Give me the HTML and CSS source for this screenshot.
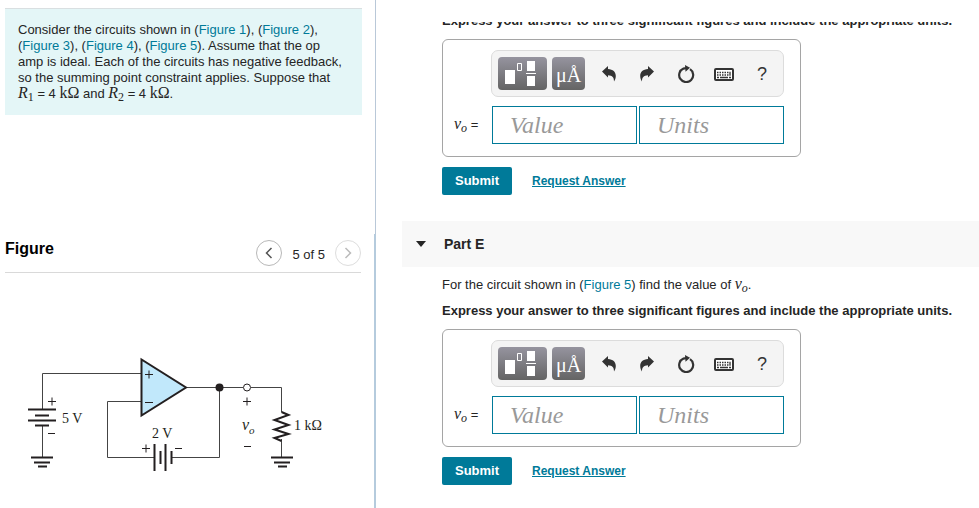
FILE: index.html
```html
<!DOCTYPE html>
<html lang="en">
<head>
<meta charset="utf-8">
<title>Op-amp circuits</title>
<link rel="stylesheet" href="styles.css">
</head>
<body>
<svg class="sprite" aria-hidden="true">
  <symbol id="template" viewBox="0 0 48 32">
    <path fill="#fff" d="M7 12h10v14H7zM29 3h8v10h-8zM29 18h8v10h-8zM28 15h10v1H28z"/>
    <path fill="none" stroke="#fff" d="M19.500 5.500h4v7h-4z"/>
  </symbol>
  <symbol id="undo" viewBox="0 0 14 16">
    <path d="M0 5.500 6 0v3c5 .3 7.800 3 7.800 7 0 2-.7 4-1.800 5.500 0-4-1.500-6-6-6.200V11.500z"/>
  </symbol>
  <symbol id="redo" viewBox="0 0 14 16">
    <path d="M14 5.500 8 0v3C3 3.300.200 6 .200 10c0 2 .7 4 1.800 5.500 0-4 1.500-6 6-6.200V11.500z"/>
  </symbol>
  <symbol id="reset" viewBox="0 0 18 18">
    <path d="M13 4.200A7 7 0 1 1 6.500 3.600L9.500 3" fill="none" stroke="currentColor" stroke-width="2.200"/>
    <path d="M8 0l5 2.700-4.500 4z"/>
  </symbol>
  <symbol id="keyboard" viewBox="0 0 20 14">
    <rect x="1" y="2" width="18" height="11" rx="1" fill="#fff" stroke="currentColor" stroke-width="2"/>
    <path d="M3 5.500h12M3 8h12" stroke="currentColor" stroke-width="1.500" stroke-dasharray="1.500 1"/>
    <path d="M3 10.500h2M6 10.500h8M15 10.500h2M16 4.700v4" stroke="currentColor" stroke-width="1.300"/>
  </symbol>
</svg>
<div class="page">
  <aside class="side">
    <section class="intro">
      <p class="problem">Consider the circuits shown in (<a href="#f1">Figure 1</a>), (<a href="#f2">Figure 2</a>), (<a href="#f3">Figure 3</a>), (<a href="#f4">Figure 4</a>), (<a href="#f5">Figure 5</a>). Assume that the op amp is ideal. Each of the circuits has negative feedback, so the summing point constraint applies. Suppose that <span class="math"><i>R</i><sub>1</sub></span> = 4 <span class="math">kΩ</span> and <span class="math"><i>R</i><sub>2</sub></span> = 4 <span class="math">kΩ</span>.</p>
    </section>
    <section class="figure" id="f5">
      <header class="figure-head">
        <h2>Figure</h2>
        <nav class="pager">
          <button type="button" aria-label="Previous figure"><svg width="8" height="12" viewBox="0 0 8 12"><path d="M6.500 1 1.500 6l5 5"/></svg></button>
          <span>5 of 5</span>
          <button type="button" aria-label="Next figure" disabled><svg width="8" height="12" viewBox="0 0 8 12"><path d="M1.500 1l5 5-5 5"/></svg></button>
        </nav>
      </header>
      <svg class="circuit" viewBox="5 350 340 125" width="340" height="125" role="img" aria-label="Op-amp circuit">
        <g class="wire">
          <path d="M141 373.500H42.500V409M42.500 426V457M141 401.500H107.500V457.500H154M171 457.500H219.500V387.500M186 387.500H243M251 387.500H281.500V412M281.500 439V457"/>
        </g>
        <path class="amp" d="M141.500 359.500v56L186 387.500z"/>
        <g class="plate">
          <path d="M28 409.500h28M35 415.500h14M28 420.500h28M35 425.500h14M154.500 444v27M160.500 451v13M165.500 444v27M171.500 451v13"/>
          <path d="M31 457.500h22M34 462.500h16M38 466.500h9M271 457.500h22M274 462.500h16M278 466.500h9"/>
          <path d="M281.500 412l7 3-14 5 14 5-14 4.500 14 4.500-14 4 7 3" fill="none"/>
        </g>
        <circle cx="219.500" cy="387.500" r="4" fill="#231f20"/>
        <circle cx="247" cy="387.500" r="3.500" fill="#fff" stroke="#231f20"/>
        <path class="sign" d="M145 374.500h8M149 370.500v8M145 402.500h8M48 401.500h8M52 397.500v8M48 433.500h7M142 448.500h8M146 444.500v8M175 448.500h7M243 401.500h8M247 397.500v8M244 446.500h7"/>
        <text x="62" y="423">5 V</text>
        <text x="152" y="438">2 V</text>
        <text x="242" y="430" class="var">v<tspan dy="4" class="small">o</tspan></text>
        <text x="294" y="430">1 kΩ</text>
      </svg>
    </section>
  </aside>
  <main class="content">
    <section class="part part-scrolled">
      <p class="instruction">Express your answer to three significant figures and include the appropriate units.</p>
      <form class="answer">
        <div class="toolbar">
          <button type="button" class="key wide" aria-label="Templates"><svg width="48" height="32"><use href="#template"/></svg></button>
          <button type="button" class="key" aria-label="Units">μÅ</button>
          <button type="button" class="tool" aria-label="Undo"><svg width="14" height="16"><use href="#undo"/></svg></button>
          <button type="button" class="tool" aria-label="Redo"><svg width="14" height="16"><use href="#redo"/></svg></button>
          <button type="button" class="tool" aria-label="Reset"><svg width="18" height="18"><use href="#reset"/></svg></button>
          <button type="button" class="tool" aria-label="Keyboard"><svg width="20" height="14"><use href="#keyboard"/></svg></button>
          <button type="button" class="tool" aria-label="Help">?</button>
        </div>
        <div class="entry">
          <label for="value-d"><span class="math"><i>v<sub>o</sub></i></span> =</label>
          <input id="value-d" type="text" placeholder="Value">
          <input type="text" placeholder="Units" aria-label="Units">
        </div>
      </form>
      <div class="actions"><button type="button" class="submit">Submit</button><a href="#answer-d">Request Answer</a></div>
    </section>
    <h2 class="part-title"><svg width="10" height="6" viewBox="0 0 10 6" aria-hidden="true"><path d="M0 0h10L5 6z"/></svg>Part E</h2>
    <section class="part">
      <p>For the circuit shown in (<a href="#f5">Figure 5</a>) find the value of <span class="math"><i>v<sub>o</sub></i></span>.</p>
      <p class="instruction">Express your answer to three significant figures and include the appropriate units.</p>
      <form class="answer">
        <div class="toolbar">
          <button type="button" class="key wide" aria-label="Templates"><svg width="48" height="32"><use href="#template"/></svg></button>
          <button type="button" class="key" aria-label="Units">μÅ</button>
          <button type="button" class="tool" aria-label="Undo"><svg width="14" height="16"><use href="#undo"/></svg></button>
          <button type="button" class="tool" aria-label="Redo"><svg width="14" height="16"><use href="#redo"/></svg></button>
          <button type="button" class="tool" aria-label="Reset"><svg width="18" height="18"><use href="#reset"/></svg></button>
          <button type="button" class="tool" aria-label="Keyboard"><svg width="20" height="14"><use href="#keyboard"/></svg></button>
          <button type="button" class="tool" aria-label="Help">?</button>
        </div>
        <div class="entry">
          <label for="value-e"><span class="math"><i>v<sub>o</sub></i></span> =</label>
          <input id="value-e" type="text" placeholder="Value">
          <input type="text" placeholder="Units" aria-label="Units">
        </div>
      </form>
      <div class="actions"><button type="button" class="submit">Submit</button><a href="#answer-e">Request Answer</a></div>
    </section>
  </main>
</div>
</body>
</html>
```

FILE: styles.css
```css
* { box-sizing: border-box; }
body {
  margin: 0;
  background: #fff;
  color: #252525;
  font: 13px/16px "Liberation Sans", Arial, sans-serif;
}
p, h2 { margin: 0; }
a { color: #007a99; text-decoration: none; }
button, input { font: inherit; }
button { border: 0; padding: 0; background: none; color: inherit; }
svg { display: block; fill: currentColor; }
.sprite { display: none; }
.math { font-family: "Liberation Serif", "Times New Roman", serif; font-size: 16px; line-height: 1px; }
.math sub { font-size: 12px; line-height: 1px; vertical-align: -3px; }

.page { display: flex; min-height: 100vh; }
.side { flex: 0 0 376px; display: flex; flex-direction: column; }
.intro { min-height: 234px; padding: 8px 13px 0 5px; border-right: 1px solid #b9c8d8; }
.problem {
  min-height: 107px;
  padding: 13px 17px 13px 13px;
  border-top: 1px solid #d9dfe1;
  background: #e4f6f7;
}
.figure { flex: 1; padding: 0 13px 0 5px; border-right: 2px solid #b5cbdd; }
.figure-head {
  display: flex;
  align-items: center;
  justify-content: space-between;
  height: 39px;
  border-bottom: 1px solid #d9d9d9;
}
.figure-head h2 { padding-bottom: 8px; color: #000; font-size: 16px; line-height: 20px; }
.pager { display: flex; align-items: center; gap: 10px; }
.pager span { padding-top: 3px; }
.pager button {
  display: grid;
  place-items: center;
  width: 26px;
  height: 26px;
  border: 1px solid #b8b8b8;
  border-radius: 50%;
  color: #555;
}
.pager button:disabled { border-color: #ddd; color: #bbb; }
.pager path { fill: none; stroke: currentColor; stroke-width: 1.5; }
.circuit { max-width: 100%; margin-top: 77px; font: 14px "Liberation Serif", serif; fill: #231f20; }
.wire path { fill: none; stroke: #444; }
.amp { fill: #c1e8fb; stroke: #231f20; stroke-width: 2; }
.plate path { stroke: #231f20; stroke-width: 2; }
.sign { stroke: #231f20; }
.var { font-style: italic; font-size: 16px; }
.small { font-size: 11px; }

.content { flex: 1; min-width: 0; padding: 22px 0 0 26px; }
.part { display: flex; flex-direction: column; gap: 10px; padding: 10px 12px 24px 40px; }
.part-scrolled { overflow: hidden; padding: 0 12px 26px 40px; }
.part-scrolled .instruction { margin-top: -9px; }
.instruction { font-weight: bold; white-space: nowrap; }
.answer {
  width: 100%;
  max-width: 359px;
  padding: 10px 16px 12px 11px;
  border: 1px solid #a5a5a5;
  border-radius: 6px;
}
.toolbar {
  display: flex;
  align-items: center;
  height: 47px;
  margin-left: 37px;
  padding: 0 2px 0 6px;
  border: 1px solid #dcdcdc;
  border-radius: 7px;
  background: #f4f4f4;
}
.key {
  width: 33px;
  height: 33px;
  margin-right: 5px;
  border-radius: 4px;
  background: linear-gradient(#96949f, #646464);
  color: #fff;
  font: 20px/36px "Liberation Serif", serif;
}
.key.wide { width: 49px; }
.tool {
  flex: 1;
  display: grid;
  place-items: center;
  color: #333;
  font-size: 18px;
}
.entry { display: flex; align-items: center; gap: 2px; margin-top: 9px; }
.entry label { flex: 0 0 36px; white-space: nowrap; }
.entry input {
  flex: 1;
  min-width: 0;
  height: 38px;
  padding: 0 17px;
  border: 1px solid #007a99;
  border-radius: 0;
  background: #fff;
  font: italic 24px "Liberation Serif", serif;
}
.entry input::placeholder { color: #999; opacity: 1; }
.actions { display: flex; align-items: center; gap: 20px; }
.submit {
  width: 70px;
  height: 28px;
  border-radius: 2px;
  background: #007a99;
  color: #fff;
  font-size: 13px;
  font-weight: bold;
}
.actions a { font-size: 12px; font-weight: bold; text-decoration: underline; }
.part-title {
  display: flex;
  align-items: center;
  gap: 18px;
  height: 46px;
  padding-left: 14px;
  background: #f8f8f8;
  font-size: 14px;
}
```
